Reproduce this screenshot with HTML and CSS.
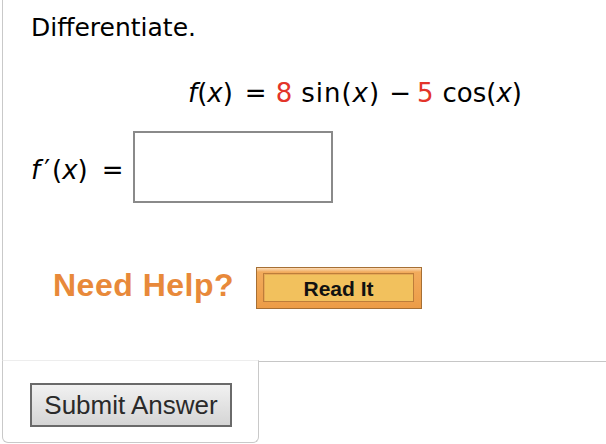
FILE: index.html
```html
<!DOCTYPE html>
<html>
<head>
<meta charset="utf-8">
<link rel="stylesheet" href="styles.css">
</head>
<body>
<div class="page">
  <div class="question">
    <p class="prompt">Differentiate.</p>
    <div class="equation">
      <span class="tok"><i>f</i>(<i>x</i>)</span>
      <span class="tok eq">=</span>
      <span class="tok red">8</span>
      <span class="tok wide">sin(<i>x</i>)</span>
      <span class="tok">−</span>
      <span class="tok red five">5</span>
      <span class="tok">cos(<i>x</i>)</span>
    </div>
    <div class="answer-row">
      <span class="answer-label"><i>f</i><span class="prime">′</span>(<i>x</i>)<span class="label-eq">=</span></span>
      <input class="answer-box" type="text" aria-label="answer">
    </div>
    <div class="help-row">
      <span class="need-help">Need Help?</span>
      <span class="readit"><span class="readit-inner">Read It</span></span>
    </div>
  </div>
  <div class="footer">
    <div class="submit-box"><button class="submit" type="button">Submit Answer</button></div>
    <div class="footer-rest"></div>
  </div>
</div>
</body>
</html>
```

FILE: styles.css
```css
html, body {
  margin: 0;
  background: #ffffff;
}
body {
  font-family: "DejaVu Sans", Verdana, sans-serif;
  color: #000;
}
.page {
  padding-left: 2px;
}
.question {
  border-left: 1px solid #c9c9c9;
  padding: 13px 0 51px 28px;
}
.prompt {
  margin: 0;
  font-size: 25px;
  line-height: 30px;
}
.equation {
  display: flex;
  gap: 9px;
  margin: 35px 0 0 157px;
  font-size: 26px;
  line-height: 30px;
  white-space: nowrap;
}
.equation i, .answer-label i {
  font-style: italic;
}
.equation .eq {
  margin-left: 3px;
}
.equation .five {
  margin-left: -3px;
}
.equation .wide {
  letter-spacing: 1px;
}
.red {
  color: #e3342a;
}
.answer-row {
  display: flex;
  align-items: flex-start;
  margin-top: 23px;
}
.answer-label {
  display: flex;
  margin-top: 24px;
  font-size: 26px;
  line-height: 30px;
  white-space: nowrap;
}
.prime {
  margin: 0 2px 0 4px;
}
.label-eq {
  margin-left: 14px;
}
.answer-box {
  box-sizing: border-box;
  width: 200px;
  height: 72px;
  margin: 0 0 0 9px;
  padding: 0;
  border: 2px solid #8a8a8a;
  border-radius: 0;
  background: #fff;
  outline: none;
}
.help-row {
  display: flex;
  align-items: flex-start;
  margin-top: 64px;
  padding-left: 22px;
}
.need-help {
  font-family: "Liberation Sans", Arial, sans-serif;
  font-weight: bold;
  font-size: 32px;
  letter-spacing: 0.5px;
  line-height: 36px;
  color: #e8893a;
  white-space: nowrap;
}
.readit {
  display: flex;
  box-sizing: border-box;
  width: 166px;
  height: 42px;
  margin-left: 22px;
  padding: 5px 7px 6px 6px;
  border: 1px solid #a66f34;
  background: linear-gradient(#fcdcb8 0, #f2ab5c 4px, #ec9c47 100%);
}
.readit-inner {
  flex: 1;
  border: 1px solid #bd7d3a;
  background: #f2c15d;
  box-shadow: inset 1px 1px 0 #e7a955;
  padding-top: 2px;
  font-family: "Liberation Sans", Arial, sans-serif;
  font-weight: bold;
  font-size: 21px;
  line-height: 25px;
  text-align: center;
  color: #111;
}
.footer {
  display: flex;
  align-items: flex-start;
}
.submit-box {
  border: 1px solid #c9c9c9;
  border-top-color: #ededed;
  border-radius: 0 0 6px 6px;
  padding: 22px 26px 15px 27px;
}
.submit {
  display: block;
  box-sizing: border-box;
  width: 202px;
  height: 44px;
  margin: 0;
  padding: 0;
  border: 2px solid #6a6a6a;
  border-radius: 0;
  background: linear-gradient(#f1f1f1, #d5d5d5);
  font-family: "Liberation Sans", Arial, sans-serif;
  font-size: 26px;
  color: #2a2a2a;
}
.footer-rest {
  flex: 1;
  margin-top: 1px;
  border-top: 1px solid #c6c6c6;
}
```
